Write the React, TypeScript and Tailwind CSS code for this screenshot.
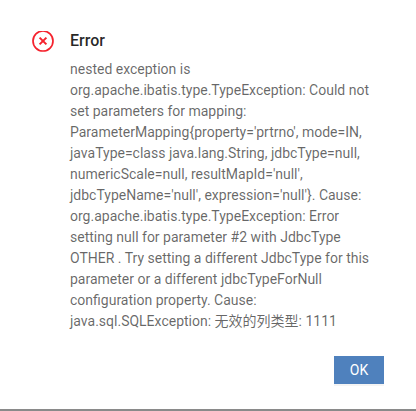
import React from "react";

const MESSAGE =
  "nested exception is org.apache.ibatis.type.TypeException: Could not set parameters for mapping: ParameterMapping{property='prtrno', mode=IN, javaType=class java.lang.String, jdbcType=null, numericScale=null, resultMapId='null', jdbcTypeName='null', expression='null'}. Cause: org.apache.ibatis.type.TypeException: Error setting null for parameter #2 with JdbcType OTHER . Try setting a different JdbcType for this parameter or a different jdbcTypeForNull configuration property. Cause: java.sql.SQLException: 无效的列类型: 1111";

const App: React.FC = () => {
  return (
    <div className="w-[416px] h-[411px] bg-white overflow-hidden flex flex-col font-['Roboto','Noto_Sans_CJK_SC',sans-serif]">
      <div className="flex-1 pt-[30px] pl-8 pr-8">
        <div className="flex gap-[16px]">
          <svg width="22" height="22" viewBox="0 0 22 22" fill="none" className="mt-[1px] shrink-0">
            <circle cx="11" cy="10" r="10" stroke="#f5222d" strokeWidth="1.7" />
            <path d="M7.6 6.6 14.4 13.4M14.4 6.6 7.6 13.4" stroke="#f5222d" strokeWidth="2" />
          </svg>
          <div className="min-w-0">
            <div className="text-base font-medium leading-[22px] text-[rgba(0,0,0,0.85)]">Error</div>
            <div className="mt-[7px] text-sm leading-[21px] text-[rgba(0,0,0,0.6)] break-words">{MESSAGE}</div>
          </div>
        </div>
        <div className="mt-6 flex justify-end">
          <button className="w-[50px] h-[28px] bg-[#4f81bd] text-white text-sm shadow-[0_2px_0_rgba(0,0,0,0.045)]">OK</button>
        </div>
      </div>
      <div className="h-0.5 bg-[#8a8a8a]" />
    </div>
  );
};

export default App;
